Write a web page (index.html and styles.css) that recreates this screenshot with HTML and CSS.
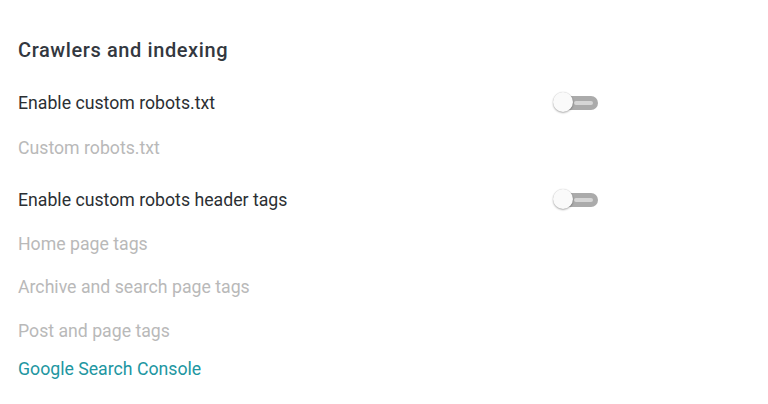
FILE: index.html
```html
<!DOCTYPE html>
<html>
<head>
<meta charset="utf-8">
<link rel="stylesheet" href="styles.css">
</head>
<body>
<div class="panel">
  <h2 class="title">Crawlers and indexing</h2>
  <div class="row r1">
    <span class="label">Enable custom robots.txt</span>
    <span class="switch"><span class="track"></span><span class="thumb"></span></span>
  </div>
  <div class="row r2"><span class="label muted">Custom robots.txt</span></div>
  <div class="row r3">
    <span class="label">Enable custom robots header tags</span>
    <span class="switch"><span class="track"></span><span class="thumb"></span></span>
  </div>
  <div class="row r4"><span class="label muted">Home page tags</span></div>
  <div class="row r5"><span class="label muted">Archive and search page tags</span></div>
  <div class="row"><span class="label muted">Post and page tags</span></div>
  <a class="link">Google Search Console</a>
</div>
</body>
</html>
```
FILE: styles.css
```css
html, body {
  margin: 0;
  padding: 0;
  background: #fff;
}
body {
  font-family: Roboto, "Liberation Sans", sans-serif;
  width: 768px;
  height: 404px;
  overflow: hidden;
}
.panel {
  width: 580px;
  padding: 38px 18px 0 18px;
  display: flex;
  flex-direction: column;
}
.title {
  margin: 0;
  font-size: 20px;
  line-height: 24px;
  font-weight: 500;
  letter-spacing: 0.6px;
  color: #333840;
}
.row {
  height: 44px;
  display: flex;
  align-items: center;
  justify-content: space-between;
}
.r1 { margin-top: 19px; }
.r2 { margin-top: 1px; }
.r3 { margin-top: 8px; }
.r5 { margin-top: -1px; }
.label {
  font-size: 17.7px;
  color: #2b2f33;
}
.label.muted {
  color: #b9b9b9;
}
.switch {
  position: relative;
  width: 45px;
  height: 22px;
}
.track {
  position: absolute;
  right: 0;
  top: 4px;
  width: 36px;
  height: 14px;
  border-radius: 7px;
  background: #ababab;
}
.track::after {
  content: "";
  position: absolute;
  left: 12px;
  right: 5px;
  top: 5px;
  height: 4px;
  border-radius: 2px;
  background: #d6d6d6;
}
.thumb {
  position: absolute;
  left: 0;
  top: 0;
  width: 20px;
  height: 20px;
  border-radius: 50%;
  background: #fafafa;
  box-shadow: 0 1px 2px rgba(0,0,0,0.3), 0 0 1px rgba(0,0,0,0.2);
}
.link {
  margin-top: 5px;
  font-size: 17.7px;
  line-height: 22px;
  color: #2196a1;
  text-decoration: none;
}
```
